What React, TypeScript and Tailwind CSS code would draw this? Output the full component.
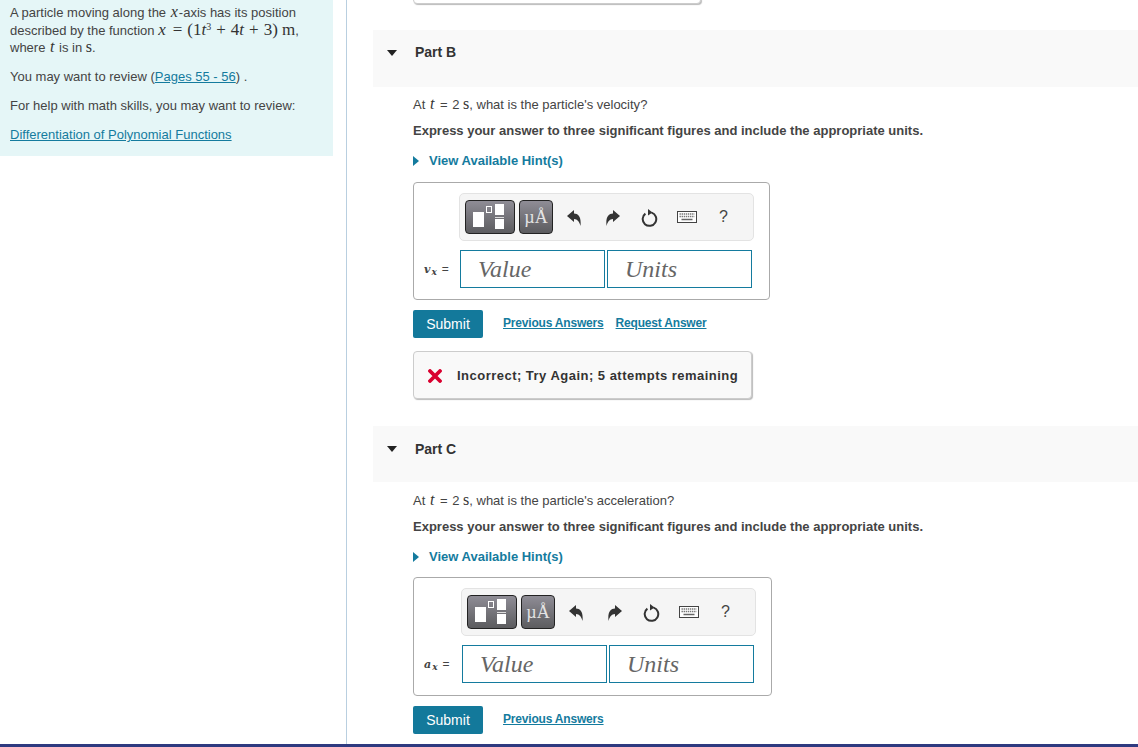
import { ReactNode } from "react";

const SANS = "font-['Liberation_Sans',Arial,sans-serif]";
const SERIF = "font-['Liberation_Serif','Times_New_Roman',serif]";

function M({ children }: { children: ReactNode }) {
  return <span className="font-['Liberation_Serif',serif] text-[16px] leading-none text-[#333]">{children}</span>;
}

function I({ children }: { children: ReactNode }) {
  return <span className="px-[1px] font-['Liberation_Serif',serif] italic text-[16px] leading-none text-[#333]">{children}</span>;
}

function EqM({ children }: { children: ReactNode }) {
  return <span className="font-['Liberation_Serif',serif] text-[17px] leading-none text-[#333]">{children}</span>;
}

function EqI({ children }: { children: ReactNode }) {
  return <span className="font-['Liberation_Serif',serif] italic text-[17px] leading-none text-[#333]">{children}</span>;
}

function Op({ children }: { children: ReactNode }) {
  return <span className="mx-[5px] font-['Liberation_Serif',serif] text-[17px] leading-none text-[#333]">{children}</span>;
}

function TemplatesIcon() {
  return (
    <svg width="36" height="30" viewBox="0 0 36 30" className="block ml-[1px]">
      <rect x="0" y="10" width="11" height="15" fill="#fff" />
      <rect x="13.5" y="4.5" width="5" height="6" fill="none" stroke="#fff" strokeWidth="1" />
      <rect x="22" y="2" width="9" height="11" fill="#fff" />
      <rect x="22" y="15" width="9" height="1" fill="#ddd" />
      <rect x="22" y="17" width="9" height="10" fill="#fff" />
    </svg>
  );
}

function UndoIcon({ flip }: { flip?: boolean }) {
  return (
    <svg width="14" height="17" viewBox="0 0 14 17" className={flip ? "-scale-x-100" : ""}>
      <path d="M0 7 L7 1 L7 4.5 C11.5 4.5 14.4 8 13.5 17 C12.5 13 10.5 10 7 10 L7 13 Z" fill="#333" />
    </svg>
  );
}

function ResetIcon() {
  return (
    <svg width="17" height="19" viewBox="0 0 17 19">
      <path d="M10.6 4.6 A6.8 6.8 0 1 1 4.4 5.6" fill="none" stroke="#333" strokeWidth="2" />
      <path d="M7 1 L11.5 4.4 L7 7.4 Z" fill="#333" />
    </svg>
  );
}

function KeyboardIcon() {
  return (
    <svg width="20" height="12" viewBox="0 0 20 12">
      <rect x="0.5" y="0.5" width="19" height="11" fill="#fff" stroke="#444" />
      <path d="M2.5 3 H17.5 M2.5 5.5 H17.5" stroke="#777" strokeWidth="1.3" strokeDasharray="1.4 0.7" />
      <path d="M4.5 8.5 H15.5" stroke="#666" strokeWidth="1.5" />
    </svg>
  );
}

function Toolbar() {
  return (
    <div className="flex items-center w-[295px] h-[48px] pl-[5px] bg-[#f5f5f5] border border-[#e3e3e3] rounded-[5px]">
      <div className="flex items-center justify-center w-[50px] h-[34px] rounded-[4px] border border-[#222] bg-gradient-to-b from-[#8f8d96] to-[#5c5c5f]">
        <TemplatesIcon />
      </div>
      <div className={`flex items-center justify-center w-[34px] h-[34px] ml-[4px] rounded-[4px] border border-[#222] bg-gradient-to-b from-[#8f8d96] to-[#5c5c5f] text-[#e4e4e4] text-[18px] ${SERIF}`}>
        <span>µÅ</span>
      </div>
      <div className="flex items-center ml-[14px]">
        <UndoIcon />
      </div>
      <div className="flex items-center ml-[25px]">
        <UndoIcon flip />
      </div>
      <div className="flex items-center ml-[21px]">
        <ResetIcon />
      </div>
      <div className="flex items-center ml-[19px]">
        <KeyboardIcon />
      </div>
      <div className={`ml-[22px] text-[16px] text-[#444] ${SANS}`}>?</div>
    </div>
  );
}

function AnswerBox({ sub, name, wide }: { sub: string; name: string; wide?: boolean }) {
  return (
    <div className={wide ? "w-[359px] h-[119px] pt-[10px] border border-[#aaa] rounded-[4px]" : "w-[357px] h-[118px] pt-[10px] border border-[#aaa] rounded-[4px]"}>
      <div className={wide ? "ml-[47px]" : "ml-[45px]"}>
        <Toolbar />
      </div>
      <div className="flex items-center mt-[9px]">
        <div className={wide ? "w-[48px] pl-[10px] text-[12px] text-[#444] whitespace-nowrap" : "w-[46px] pl-[10px] text-[12px] text-[#444] whitespace-nowrap"}>
          <span className="mr-[1px] font-['DejaVu_Serif',serif] italic font-bold text-[11px]">{name}</span>
          <sub className="font-['DejaVu_Serif',serif] italic font-bold text-[9px]">{sub}</sub>
          <span className="ml-[5px]">=</span>
        </div>
        <div className={`flex items-center w-[145px] h-[38px] pl-[17px] border border-[#147b9e] text-[24px] italic text-[#666] ${SERIF}`}>Value</div>
        <div className={`flex items-center w-[145px] h-[38px] ml-[2px] pl-[17px] border border-[#147b9e] text-[24px] italic text-[#666] ${SERIF}`}>Units</div>
      </div>
    </div>
  );
}

function Caret() {
  return <div className="w-0 h-0 border-x-[5px] border-x-transparent border-t-[6px] border-t-[#222]" />;
}

function PartHeader({ title, tall }: { title: string; tall?: boolean }) {
  return (
    <div className={tall ? "flex h-[57px] pt-[15px] bg-[#f9f9f9]" : "flex h-[56px] pt-[15px] bg-[#f9f9f9]"}>
      <div className="flex items-center h-[14px] pl-[14px] w-[42px] mt-[1px]">
        <Caret />
      </div>
      <div className={tall ? "text-[14px] leading-[15px] font-bold text-[#333]" : "mt-[1px] text-[14px] leading-[15px] font-bold text-[#333]"}>{title}</div>
    </div>
  );
}

function Question({ what }: { what: string }) {
  return (
    <div className="ml-[40px]">
      <p className="text-[13px] leading-[16px] text-[#444]">
        At <I>t</I> <span className="mx-[1px]">=</span> 2 <M>s</M>, what is the particle's {what}?
      </p>
      <p className="mt-[10px] text-[13px] leading-[16px] font-bold text-[#444]">
        Express your answer to three significant figures and include the appropriate units.
      </p>
      <div className="flex items-center mt-[14px] h-[16px] text-[13px] font-bold text-[#147b9e]">
        <div className="w-0 h-0 border-y-[5px] border-y-transparent border-l-[6px] border-l-[#147b9e] mr-[10px]" />
        View Available Hint(s)
      </div>
    </div>
  );
}

function ActionRow({ request }: { request?: boolean }) {
  return (
    <div className="flex items-center mt-[10px] h-[28px]">
      <button className="w-[70px] h-[28px] bg-[#13799b] rounded-[2px] text-white text-[14px]">Submit</button>
      <a className="ml-[20px] mb-[2px] text-[12px] tracking-[-0.19px] font-bold text-[#147b9e] underline">Previous Answers</a>
      {request && <a className="ml-[12px] mb-[2px] text-[12px] tracking-[-0.19px] font-bold text-[#147b9e] underline">Request Answer</a>}
    </div>
  );
}

export default function App() {
  return (
    <div className={`flex flex-col h-[747px] overflow-hidden bg-white ${SANS}`}>
      <div className="flex flex-1 min-h-0">
        <aside className="w-[347px] shrink-0 border-r border-[#b9cfe0]">
          <div className="w-[333px] h-[156px] pl-[10px] pt-[4px] bg-[#e5f6f7] text-[13px] text-[#444]">
            <p className="leading-[17px]">
              A particle moving along the <I>x</I>-axis has its position
              <br />
              described by the function <EqI>x</EqI>
              <span className="ml-[2px]" />
              <Op>=</Op>
              <EqM>(1</EqM>
              <EqI>t</EqI>
              <sup className="font-['Liberation_Serif',serif] text-[10px] leading-none text-[#333]">3</sup>
              <Op>+</Op>
              <EqM>4</EqM>
              <EqI>t</EqI>
              <Op>+</Op>
              <EqM>3) m</EqM>,
              <br />
              where <I>t</I> is in <M>s</M>.
            </p>
            <p className="mt-[12px] leading-[17px]">
              You may want to review (<a className="text-[#147b9e] underline">Pages 55 - 56</a>) .
            </p>
            <p className="mt-[12px] leading-[17px]">For help with math skills, you may want to review:</p>
            <p className="mt-[12px] leading-[17px]">
              <a className="text-[#147b9e] underline">Differentiation of Polynomial Functions</a>
            </p>
          </div>
        </aside>
        <main className="flex-1 min-w-0 pl-[26px]">
          <div className="ml-[40px] w-[288px] h-[5px] -mt-[1px] bg-white border border-[#ccc] rounded-b-[4px] shadow-[1px_1px_1px_#bbb]" />
          <div className="mt-[26px]">
            <PartHeader title="Part B" tall />
          </div>
          <div className="mt-[9px]">
            <Question what="velocity" />
          </div>
          <div className="ml-[40px] mt-[13px]">
            <AnswerBox name="v" sub="x" />
            <ActionRow request />
            <div className="flex items-center w-[339px] h-[48px] mt-[13px] pt-[2px] pl-[14px] bg-[#f9f9f9] border border-[#ccc] rounded-[4px] shadow-[1px_1px_1px_#bbb]">
              <svg width="14" height="14" viewBox="0 0 14 14" className="shrink-0">
                <path d="M2 2 L12 12 M12 2 L2 12" stroke="#d9002f" strokeWidth="3.8" strokeLinecap="round" />
              </svg>
              <span className="ml-[15px] text-[13px] font-bold text-[#333] tracking-[0.48px] whitespace-nowrap">Incorrect; Try Again; 5 attempts remaining</span>
            </div>
          </div>
          <div className="mt-[27px]">
            <PartHeader title="Part C" />
          </div>
          <div className="mt-[10px]">
            <Question what="acceleration" />
          </div>
          <div className="ml-[40px] mt-[12px]">
            <AnswerBox name="a" sub="x" wide />
            <ActionRow />
          </div>
        </main>
      </div>
      <div className="h-[3px] shrink-0 bg-[#2f3a80]" />
    </div>
  );
}
